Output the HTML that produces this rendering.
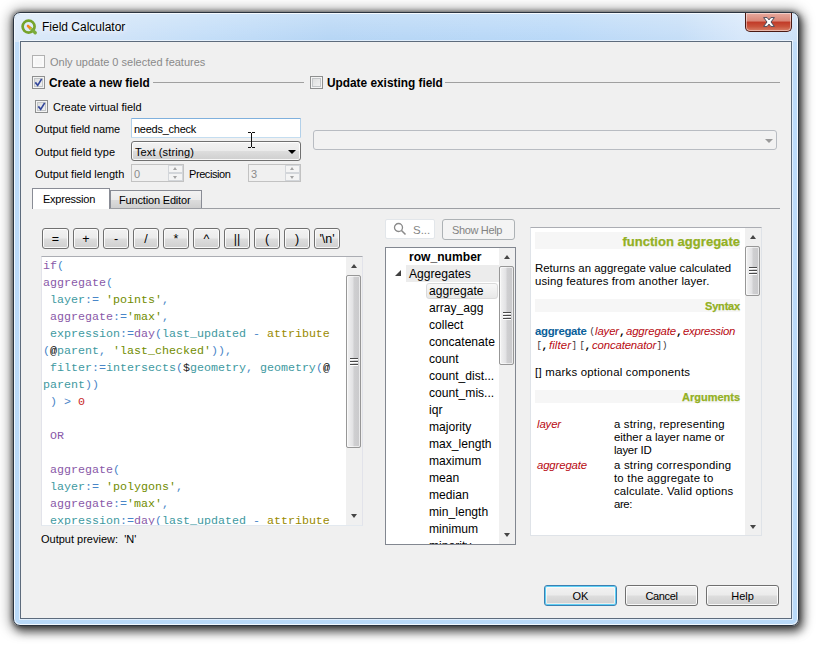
<!DOCTYPE html>
<html lang="en">
<head>
<meta charset="utf-8">
<title>Field Calculator</title>
<style>
html,body{margin:0;padding:0;background:#fff;}
body{width:817px;height:645px;position:relative;overflow:hidden;font-family:"Liberation Sans",sans-serif;font-size:11px;color:#000;}
*{box-sizing:border-box;}
.abs{position:absolute;}
#win{position:absolute;left:13px;top:12px;width:786px;height:614px;border-radius:7px;
 background:linear-gradient(180deg,#c6dff8 0,#bddbfa 60px,#badaf9 100%);
 border:1px solid #2b3440;
 box-shadow:inset 0 0 0 1px rgba(255,255,255,.8), 0 0 4px 1px rgba(0,0,0,.4), 3px 5px 9px 1px rgba(0,0,0,.5), 0 1px 13px 3px rgba(0,0,0,.4);}
#titlebar{position:absolute;left:1px;top:1px;width:782px;height:28px;border-radius:6px 6px 0 0;
 background:linear-gradient(180deg,rgba(255,255,255,.25) 0,rgba(255,255,255,0) 100%),linear-gradient(90deg,#dbe9f9 0,#cfe3f8 12%,#c2ddf8 25%,#b5d5f5 40%,#b8d8f8 70%,#c4ddf7 85%,#d6e7fa 93%,#cbe0f7 100%);}
#title{position:absolute;left:42px;top:20px;text-shadow:0 0 5px rgba(255,255,255,.9),0 0 9px rgba(255,255,255,.9),0 0 14px rgba(255,255,255,.8);font-size:12px;line-height:15px;color:#000;white-space:nowrap;}
#client{position:absolute;left:20px;top:41px;width:772px;height:578px;background:#f0f0f0;border:1px solid #5d6b7c;box-shadow:0 0 0 1px rgba(255,255,255,.55);}
#close{position:absolute;left:745px;top:13px;width:47px;height:19px;border:1px solid #4a1a14;border-top:none;border-radius:0 0 5px 5px;
 background:linear-gradient(180deg,#e8aa9f 0,#d98676 45%,#c13a27 50%,#c9533b 75%,#d98169 100%);
 box-shadow:inset 0 0 0 1px rgba(255,255,255,.45);}
.t{position:absolute;white-space:nowrap;line-height:13px;margin-top:1px;}
.cb{position:absolute;width:13px;height:13px;border:1px solid #8e8f8f;background:linear-gradient(135deg,#d9dada 0,#f6f6f6 100%);box-shadow:inset 0 0 0 1px #f4f4f4, inset 0 0 0 2px #c3c6c8;}
.cb.dis{border-color:#b1b1b1;background:#f6f6f6;box-shadow:inset 0 0 0 2px #fafafa;}
.btn{position:absolute;border:1px solid #707070;border-radius:3px;background:linear-gradient(180deg,#f2f2f2 0,#ebebeb 48%,#dddddd 52%,#cfcfcf 100%);box-shadow:inset 0 0 0 1px rgba(255,255,255,.85);text-align:center;white-space:nowrap;}
.hline{position:absolute;height:1px;background:#a0a0a0;}
.spin{position:absolute;height:18px;border:1px solid #c2c2c2;background:#f0f0f0;color:#8a8a8a;}
.ed{font-family:"Liberation Mono",monospace;font-size:11.67px;line-height:17px;white-space:pre;}
.k{color:#8959a8}.o{color:#4a86c8}.v{color:#3e999f}.s{color:#718c00}.f{color:#9a8a00}.n{color:#c82829}.d{color:#111;font-weight:bold}
.sb{position:absolute;background:#f0f0f0;}
.thumb{position:absolute;border:1px solid #979797;border-radius:2px;background:linear-gradient(90deg,#f3f3f3 0,#e2e2e4 45%,#cfcfd1 55%,#c9c9cb 100%);box-shadow:inset 0 0 0 1px rgba(255,255,255,.6);}
.tri-u{position:absolute;width:0;height:0;margin-left:.5px;border-left:3.5px solid transparent;border-right:3.5px solid transparent;border-bottom:4px solid #454545;}
.tri-d{position:absolute;width:0;height:0;margin-left:.5px;border-left:3.5px solid transparent;border-right:3.5px solid transparent;border-top:4px solid #454545;}
.grip{position:absolute;width:8px;height:8px;background:linear-gradient(180deg,#4a4a4a 0,#4a4a4a 1px,#fff 1px,#fff 2px,transparent 2px,transparent 3px,#4a4a4a 3px,#4a4a4a 4px,#fff 4px,#fff 5px,transparent 5px,transparent 6px,#4a4a4a 6px,#4a4a4a 7px,#fff 7px,#fff 8px);}
.tree{font-size:12.1px;line-height:17px;}
.help{font-size:11.4px;line-height:13px;color:#000;}
.hb{position:absolute;left:535px;width:205px;background:#f6f6f6;}
.hh{position:absolute;right:77px;white-space:nowrap;color:#93b023;font-weight:bold;text-align:right;-webkit-text-stroke:.25px #93b023;}
.arg{color:#b80a12;font-style:italic;}
</style>
</head>
<body>
<div id="win"><div id="titlebar"></div></div>
<svg class="abs" style="left:21px;top:19px" width="16" height="16" viewBox="0 0 16 16">
 <circle cx="7.6" cy="7.6" r="6" fill="none" stroke="#76a32a" stroke-width="2.7"/>
 <line x1="9.6" y1="9.4" x2="14.2" y2="13.8" stroke="#79ab3a" stroke-width="3.3" stroke-linecap="round"/>
 <line x1="8.6" y1="8.5" x2="10.4" y2="10.2" stroke="#b9c94a" stroke-width="2.6"/>
 <line x1="7" y1="7" x2="8.6" y2="8.5" stroke="#f2861c" stroke-width="2.6" stroke-linecap="round"/>
</svg>
<div id="title">Field Calculator</div>
<div id="close"></div>
<svg class="abs" style="left:762px;top:16px" width="14" height="12" viewBox="0 0 14 12">
 <path d="M1.6 1.6 L5.2 1.6 L7 3.9 L8.8 1.6 L12.4 1.6 L9 6 L12.4 10.4 L8.8 10.4 L7 8.1 L5.2 10.4 L1.6 10.4 L5 6 Z" fill="#fff" stroke="#4a4a5a" stroke-width="1" stroke-linejoin="round"/>
</svg>
<div id="client"></div>

<!-- top form -->
<div class="cb dis" style="left:32px;top:55px"></div>
<div class="t" style="left:50px;top:55px;color:#8a8a8a">Only update 0 selected features</div>

<div class="cb" style="left:32px;top:76px"></div>
<svg class="abs" style="left:34px;top:78px" width="9" height="9" viewBox="0 0 9 9"><path d="M1.3 4.4 L3.7 7.4 L7.7 0.9" fill="none" stroke="#34489c" stroke-width="1.7"/></svg>
<div class="t" style="left:49px;top:76px;font-weight:bold;font-size:11.85px">Create a new field</div>
<div class="hline" style="left:153px;top:82px;width:151px"></div>

<div class="cb" style="left:310px;top:76px"></div>
<div class="t" style="left:327px;top:76px;font-weight:bold;font-size:11.85px">Update existing field</div>
<div class="hline" style="left:445px;top:82px;width:335px"></div>

<div class="cb" style="left:35px;top:100px"></div>
<svg class="abs" style="left:37px;top:102px" width="9" height="9" viewBox="0 0 9 9"><path d="M1.3 4.4 L3.7 7.4 L7.7 0.9" fill="none" stroke="#34489c" stroke-width="1.7"/></svg>
<div class="t" style="left:53px;top:100px">Create virtual field</div>

<div class="t" style="left:35px;top:122px;letter-spacing:-.1px">Output field name</div>
<div class="abs" style="left:131px;top:118px;width:170px;height:20px;background:#fff;border:1px solid #b2d0e9;border-top-color:#7fb0dd;border-bottom-color:#c4ddf0;border-radius:1px"></div>
<div class="t" style="left:134px;top:122px;letter-spacing:-.25px">needs_check</div>

<div class="t" style="left:35px;top:145px">Output field type</div>
<div class="btn" style="left:131px;top:141px;width:170px;height:20px"></div>
<div class="t" style="left:135px;top:145px;letter-spacing:.12px">Text (string)</div>
<div class="abs" style="left:288px;top:150px;width:0;height:0;border-left:4px solid transparent;border-right:4px solid transparent;border-top:4px solid #000"></div>

<div class="t" style="left:35px;top:167px">Output field length</div>
<div class="spin" style="left:131px;top:164px;width:53px"></div>
<div class="t" style="left:134px;top:167px;color:#8a8a8a">0</div>
<div class="abs" style="left:168px;top:165px;width:15px;height:8px;border:1px solid #d3d6da;background:#f4f4f4"></div>
<div class="abs" style="left:168px;top:173px;width:15px;height:8px;border:1px solid #d3d6da;background:#f4f4f4"></div>
<div class="abs" style="left:173px;top:167px;width:0;height:0;border-left:2.5px solid transparent;border-right:2.5px solid transparent;border-bottom:3px solid #a3a3a3"></div>
<div class="abs" style="left:173px;top:176px;width:0;height:0;border-left:2.5px solid transparent;border-right:2.5px solid transparent;border-top:3px solid #a3a3a3"></div>
<div class="t" style="left:189px;top:167px;letter-spacing:-.42px">Precision</div>
<div class="spin" style="left:248px;top:164px;width:53px"></div>
<div class="t" style="left:251px;top:167px;color:#8a8a8a">3</div>
<div class="abs" style="left:285px;top:165px;width:15px;height:8px;border:1px solid #d3d6da;background:#f4f4f4"></div>
<div class="abs" style="left:285px;top:173px;width:15px;height:8px;border:1px solid #d3d6da;background:#f4f4f4"></div>
<div class="abs" style="left:290px;top:167px;width:0;height:0;border-left:2.5px solid transparent;border-right:2.5px solid transparent;border-bottom:3px solid #a3a3a3"></div>
<div class="abs" style="left:290px;top:176px;width:0;height:0;border-left:2.5px solid transparent;border-right:2.5px solid transparent;border-top:3px solid #a3a3a3"></div>

<!-- right combo disabled -->
<div class="abs" style="left:313px;top:130px;width:464px;height:20px;border:1px solid #b8bcc2;border-radius:3px;background:#f2f2f2"></div>
<div class="abs" style="left:765px;top:139px;width:0;height:0;border-left:4px solid transparent;border-right:4px solid transparent;border-top:4px solid #9a9a9a"></div>

<!-- cursor I-beam -->
<div class="abs" style="left:251px;top:133px;width:1px;height:14px;background:#111"></div>
<div class="abs" style="left:248px;top:132px;width:3px;height:1px;background:#111"></div><div class="abs" style="left:252px;top:132px;width:3px;height:1px;background:#111"></div>
<div class="abs" style="left:248px;top:147px;width:3px;height:1px;background:#111"></div><div class="abs" style="left:252px;top:147px;width:3px;height:1px;background:#111"></div>

<!-- tabs -->
<div class="hline" style="left:32px;top:208px;width:748px;background:#9c9ea3"></div>
<div class="abs" style="left:110px;top:190px;width:92px;height:18px;border:1px solid #898c95;border-bottom:none;background:linear-gradient(180deg,#f2f2f2 0,#ebebeb 50%,#dddddd 52%,#cfcfcf 100%)"></div>
<div class="t" style="left:119px;top:193px;letter-spacing:-.17px">Function Editor</div>
<div class="abs" style="left:32px;top:188px;width:78px;height:21px;border:1px solid #898c95;border-bottom:none;background:#fff"></div>
<div class="t" style="left:43px;top:192px;letter-spacing:-.24px">Expression</div>

<!-- operator buttons -->
<div class="btn" style="left:42px;top:228px;width:27px;height:21px;line-height:20px;font-size:12.5px">=</div>
<div class="btn" style="left:73px;top:228px;width:26px;height:21px;line-height:20px;font-size:12.5px">+</div>
<div class="btn" style="left:103px;top:228px;width:26px;height:21px;line-height:20px;font-size:12.5px">-</div>
<div class="btn" style="left:133px;top:228px;width:26px;height:21px;line-height:20px;font-size:12.5px">/</div>
<div class="btn" style="left:163px;top:228px;width:26px;height:21px;line-height:20px;font-size:12.5px">*</div>
<div class="btn" style="left:193px;top:228px;width:27px;height:21px;line-height:20px;font-size:12.5px">^</div>
<div class="btn" style="left:224px;top:228px;width:26px;height:21px;line-height:20px;font-size:12.5px">||</div>
<div class="btn" style="left:254px;top:228px;width:26px;height:21px;line-height:20px;font-size:12.5px">(</div>
<div class="btn" style="left:284px;top:228px;width:26px;height:21px;line-height:20px;font-size:12.5px">)</div>
<div class="btn" style="left:314px;top:228px;width:26px;height:21px;line-height:20px;font-size:12.5px">'\n'</div>

<!-- editor -->
<div class="abs" style="left:41px;top:256px;width:322px;height:270px;background:#fff;border:1px solid #e2e3ea;border-top-color:#abadb3;border-bottom-color:#e3e9ef;overflow:hidden">
<div class="ed abs" style="left:1px;top:1px"><span class="k">if</span><span class="o">(</span>
<span class="k">aggregate</span><span class="o">(</span>
 <span class="v">layer</span><span class="o">:=</span> <span class="s">'points'</span><span class="o">,</span>
 <span class="k">aggregate</span><span class="o">:=</span><span class="s">'max'</span><span class="o">,</span>
 <span class="v">expression</span><span class="o">:=</span><span class="k">day</span><span class="o">(</span><span class="v">last_updated</span> <span class="o">-</span> <span class="f">attribute</span>
<span class="o">(</span><span class="d">@</span><span class="v">parent</span><span class="o">,</span> <span class="s">'last_checked'</span><span class="o">)),</span>
 <span class="v">filter</span><span class="o">:=</span><span class="v">intersects</span><span class="o">(</span><span style="color:#222">$</span><span class="v">geometry</span><span class="o">,</span> <span class="v">geometry</span><span class="o">(</span><span class="d">@</span>
<span class="v">parent</span><span class="o">))</span>
 <span class="o">)</span> <span class="o">&gt;</span> <span class="n">0</span>

 <span class="k">OR</span>

 <span class="k">aggregate</span><span class="o">(</span>
 <span class="v">layer</span><span class="o">:=</span> <span class="s">'polygons'</span><span class="o">,</span>
 <span class="k">aggregate</span><span class="o">:=</span><span class="s">'max'</span><span class="o">,</span>
 <span class="v">expression</span><span class="o">:=</span><span class="k">day</span><span class="o">(</span><span class="v">last_updated</span> <span class="o">-</span> <span class="f">attribute</span></div>
</div>
<div class="sb" style="left:346px;top:257px;width:16px;height:268px"></div>
<div class="tri-u" style="left:350px;top:264px"></div>
<div class="thumb" style="left:346px;top:275px;width:15px;height:173px"></div>
<div class="grip" style="left:350px;top:358px"></div>
<div class="tri-d" style="left:350px;top:514px"></div>

<div class="t" style="left:41px;top:532px">Output preview:&nbsp; 'N'</div>

<!-- search + show help -->
<div class="abs" style="left:385px;top:219px;width:50px;height:20px;background:#fff;border:1px solid #e2e6ea;border-radius:2px"></div>
<svg class="abs" style="left:393px;top:222px" width="14" height="14" viewBox="0 0 14 14"><circle cx="5.5" cy="5.5" r="4" fill="none" stroke="#8a8a8a" stroke-width="1.3"/><line x1="8.5" y1="8.5" x2="12.5" y2="12.5" stroke="#8a8a8a" stroke-width="1.6"/></svg>
<div class="t" style="left:413px;top:223px;color:#858585;font-size:11.5px">S...</div>
<div class="abs" style="left:442px;top:219px;width:73px;height:21px;border:1px solid #adb2b5;border-radius:3px;background:#f4f4f4"></div>
<div class="t" style="left:452px;top:223px;color:#838383;letter-spacing:-.35px">Show Help</div>

<!-- tree -->
<div class="abs" style="left:385px;top:247px;width:131px;height:298px;background:#fff;border:1px solid #828790;overflow:hidden">
 <div class="abs" style="left:20px;top:17px;width:93px;height:17px;background:#ececec"></div>
 <div class="abs" style="left:40px;top:35px;width:72px;height:16px;border:1px solid #dadada;border-radius:3px;background:linear-gradient(180deg,#f8f8f8,#e8e8e8)"></div>
 <div class="abs" style="left:9px;top:22px;width:0;height:0;border-left:6px solid transparent;border-bottom:6px solid #404040"></div>
 <div class="tree abs" style="left:23px;top:1px;white-space:pre"><b>row_number</b>
Aggregates</div>
 <div class="tree abs" style="left:43px;top:35px;white-space:pre">aggregate
array_agg
collect
concatenate
count
count_dist...
count_mis...
iqr
majority
max_length
maximum
mean
median
min_length
minimum
minority</div>
 <div class="sb" style="left:113px;top:0;width:16px;height:296px"></div>
 <div class="tri-u" style="left:117px;top:7px"></div>
 <div class="thumb" style="left:113px;top:18px;width:15px;height:99px"></div>
 <div class="grip" style="left:117px;top:64px"></div>
 <div class="tri-d" style="left:117px;top:285px"></div>
</div>

<!-- help panel -->
<div class="abs" style="left:530px;top:227px;width:232px;height:309px;background:#fff;border:1px solid #dfe3e8;border-top-color:#abadb3"></div>
<div class="hb" style="top:232px;height:17px"></div>
<div class="hh" style="top:234px;font-size:13px;line-height:16px;letter-spacing:0.03px;">function aggregate</div>
<div class="t help" style="left:535px;top:261px;letter-spacing:0.03px;">Returns an aggregate value calculated</div>
<div class="t help" style="left:535px;top:274px;letter-spacing:0.14px;">using features from another layer.</div>
<div class="hb" style="top:299px;height:13px"></div>
<div class="hh" style="top:300px;font-size:11px;line-height:13px;letter-spacing:-0.18px;">Syntax</div>
<div class="t help" style="left:535px;top:324px;font-weight:bold;color:#0a6099;letter-spacing:-0.32px;">aggregate</div>
<div class="t" style="left:589.5px;top:325px;font-family:'Liberation Mono',monospace;font-size:9px;color:#333">(</div>
<div class="t help arg" style="left:595px;top:324px;letter-spacing:-0.14px;">layer</div>
<div class="t" style="left:619px;top:325px;font-family:'Liberation Mono',monospace;font-size:11px;font-weight:bold;color:#000">,</div>
<div class="t help arg" style="left:626px;top:324px;letter-spacing:-0.15px;">aggregate</div>
<div class="t" style="left:676px;top:325px;font-family:'Liberation Mono',monospace;font-size:11px;font-weight:bold;color:#000">,</div>
<div class="t help arg" style="left:683px;top:324px;letter-spacing:-0.31px;">expression</div>
<div class="t" style="left:536.5px;top:339px;font-family:'Liberation Mono',monospace;font-size:9px;color:#333">[</div><div class="t" style="left:541.5px;top:339px;font-family:'Liberation Mono',monospace;font-size:11px;font-weight:bold;color:#000">,</div>
<div class="t help arg" style="left:549px;top:338px;letter-spacing:0.08px;">filter</div>
<div class="t" style="left:571.5px;top:339px;font-family:'Liberation Mono',monospace;font-size:9px;color:#333">]</div>
<div class="t" style="left:579.5px;top:339px;font-family:'Liberation Mono',monospace;font-size:9px;color:#333">[</div><div class="t" style="left:584.5px;top:339px;font-family:'Liberation Mono',monospace;font-size:11px;font-weight:bold;color:#000">,</div>
<div class="t help arg" style="left:592px;top:338px;letter-spacing:-0.15px;">concatenator</div>
<div class="t" style="left:656.5px;top:339px;font-family:'Liberation Mono',monospace;font-size:9px;color:#333">]</div><div class="t" style="left:662px;top:339px;font-family:'Liberation Mono',monospace;font-size:9px;color:#333">)</div>
<div class="t help" style="left:535px;top:365px;letter-spacing:0.23px;">[] marks optional components</div>
<div class="hb" style="top:390px;height:13px"></div>
<div class="hh" style="top:391px;font-size:11px;line-height:13px;letter-spacing:-0.01px;">Arguments</div>
<div class="t help arg" style="left:537px;top:417px;letter-spacing:-0.14px;">layer</div>
<div class="t help" style="left:614px;top:417px;letter-spacing:0.17px;">a string, representing</div>
<div class="t help" style="left:614px;top:430px;letter-spacing:-0.01px;">either a layer name or</div>
<div class="t help" style="left:614px;top:443px;letter-spacing:-0.23px;">layer ID</div>
<div class="t help arg" style="left:537px;top:458px;letter-spacing:-0.15px;">aggregate</div>
<div class="t help" style="left:614px;top:458px;letter-spacing:0.21px;">a string corresponding</div>
<div class="t help" style="left:614px;top:471px;letter-spacing:0.20px;">to the aggregate to</div>
<div class="t help" style="left:614px;top:484px;letter-spacing:0.15px;">calculate. Valid options</div>
<div class="t help" style="left:614px;top:497px;letter-spacing:-0.39px;">are:</div>
<div class="sb" style="left:745px;top:228px;width:16px;height:307px"></div>
<div class="tri-u" style="left:749px;top:235px"></div>
<div class="thumb" style="left:745px;top:246px;width:15px;height:50px"></div>
<div class="grip" style="left:749px;top:267px"></div>
<div class="tri-d" style="left:749px;top:525px"></div>

<!-- dialog buttons -->
<div class="btn" style="left:544px;top:585px;width:73px;height:21px;line-height:19px;padding-top:1px;border-color:#3c7fb1;box-shadow:inset 0 0 0 1px #5fd0f5, inset 0 0 0 2px rgba(255,255,255,.6);">OK</div>
<div class="btn" style="left:625px;top:585px;width:73px;height:21px;line-height:19px;padding-top:1px;letter-spacing:-.4px">Cancel</div>
<div class="btn" style="left:706px;top:585px;width:73px;height:21px;line-height:19px;padding-top:1px">Help</div>
</body>
</html>
